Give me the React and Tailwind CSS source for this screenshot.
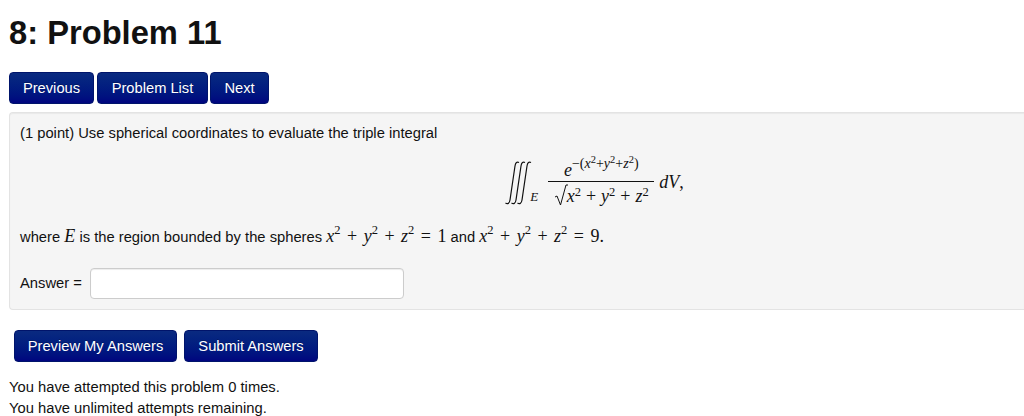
const sans = "font-['Liberation_Sans',Arial,sans-serif]";
const serif = "font-['Liberation_Serif','Times_New_Roman',serif]";

function Btn({ children, className = "" }) {
  return (
    <button className={`h-[32px] rounded-[4px] border border-[#00146b] bg-gradient-to-b from-[#0a2a80] to-[#00057f] text-[14.7px] text-white [text-shadow:0_-1px_0_rgba(0,0,0,0.25)] ${className}`}>
      {children}
    </button>
  );
}

function Sq({ c, last }) {
  return (
    <>
      <i>{c}</i>
      <sup className="text-[12.5px] leading-none top-[-8px] relative align-baseline">2</sup>
      {!last && <span className="mx-[6.5px]">+</span>}
    </>
  );
}

function Eq({ end }) {
  return (
    <span className={`${serif} text-[18px]`}>
      <Sq c="x" />
      <Sq c="y" />
      <Sq c="z" last />
      <span className="mx-[6.5px]">=</span>
      {end}
    </span>
  );
}

const small = "text-[10.5px] top-[-5px] relative align-baseline leading-none";
const den = "text-[12.5px] top-[-6px] relative align-baseline leading-none";

function Formula() {
  return (
    <div className={`${serif} flex items-center justify-center h-[72px] mt-[2px] pl-[145px] text-[#111]`}>
      <div className="flex items-end h-[56px]">
        <svg width="33" height="44" viewBox="0 0 33 44" fill="none" stroke="#111" strokeWidth="1.2" className="mb-[4px]">
          <path d="M0.500 42c2 1.500 4 .5 4.500-3l5-34c.5-3.500 2-4.500 4-3.500" />
          <path d="M6.500 42c2 1.500 4 .5 4.500-3l5-34c.5-3.500 2-4.500 4-3.500" />
          <path d="M12.500 42c2 1.500 4 .5 4.500-3l5-34c.5-3.500 2-4.500 4-3.500" />
        </svg>
        <i className="text-[13px] leading-none -ml-[8px] mb-[6px]">E</i>
      </div>
      <div className="flex flex-col items-center ml-[10px] w-[106px]">
        <div className="h-[27px] flex items-end pb-[2px] text-[18px] leading-none">
          <i>e</i>
          <span className="text-[14px] relative top-[-8px] whitespace-nowrap">
            −(<i>x</i><sup className={small}>2</sup>+<i>y</i><sup className={small}>2</sup>+<i>z</i><sup className={small}>2</sup>)
          </span>
        </div>
        <div className="w-full h-px bg-[#111]" />
        <div className="h-[26px] flex items-center text-[18px] leading-none whitespace-nowrap">
          <svg width="14" height="23" viewBox="0 0 14 23" fill="none" stroke="#111" strokeWidth="1" className="-mr-px">
            <path d="M1 13l2-1 3.500 9L12 1h2" />
          </svg>
          <span className="pt-[2px] -mt-[1px]">
            <i>x</i><sup className={den}>2</sup>
            <span className="mx-[5px]">+</span>
            <i>y</i><sup className={den}>2</sup>
            <span className="mx-[5px]">+</span>
            <i>z</i><sup className={den}>2</sup>
          </span>
        </div>
      </div>
      <span className="ml-[5px] text-[18px] mt-[3px]"><i>dV</i>,</span>
    </div>
  );
}

export default function App() {
  return (
    <div className={`${sans} w-[1024px] h-[416px] overflow-hidden bg-white text-[#111] text-[14.75px] pl-[9px]`}>
      <h1 className="h-[72px] pt-[13px] text-[32.7px] leading-[40px] font-bold">8: Problem 11</h1>
      <div className="flex h-[32px]">
        <Btn className="w-[85px] mr-[3px]">Previous</Btn>
        <Btn className="w-[111px] mr-[2px]">Problem List</Btn>
        <Btn className="w-[59px]">Next</Btn>
      </div>
      <div className="mt-[8px] h-[198px] rounded-l-[4px] border border-r-0 border-[#e3e3e3] bg-[#f5f5f5] pl-[10px] pt-[10px] shadow-[inset_0_1px_1px_rgba(0,0,0,0.05)]">
        <p className="leading-[20px]">(1 point) Use spherical coordinates to evaluate the triple integral</p>
        <Formula />
        <p className="leading-[20px] mt-[9px] whitespace-nowrap">
          where <i className={`${serif} text-[18px]`}>E</i> is the region bounded by the spheres <Eq end="1" /> and <Eq end="9." />
        </p>
        <div className="flex items-center mt-[21px]">
          <span className="mr-[8px] -mt-px">Answer =</span>
          <input className="w-[314px] h-[31px] rounded-[4px] border border-[#ccc] bg-white shadow-[inset_0_1px_1px_rgba(0,0,0,0.075)]" />
        </div>
      </div>
      <div className="flex pl-[5px] mt-[20px] gap-[7px]">
        <Btn className="w-[163px]">Preview My Answers</Btn>
        <Btn className="w-[134px]">Submit Answers</Btn>
      </div>
      <div className="mt-[15px] leading-[21px]">
        <p>You have attempted this problem 0 times.</p>
        <p>You have unlimited attempts remaining.</p>
      </div>
    </div>
  );
}
